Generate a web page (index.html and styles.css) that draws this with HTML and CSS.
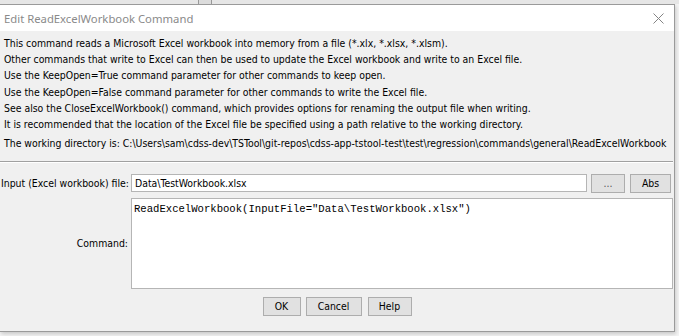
FILE: index.html
```html
<!DOCTYPE html>
<html>
<head>
<meta charset="utf-8">
<link rel="stylesheet" href="styles.css">
</head>
<body>
<div class="backdrop">
  <div class="topstrip"><span class="seg"></span></div>
  <div class="dialog">
    <div class="titlebar">
      <span class="title">Edit ReadExcelWorkbook Command</span>
      <svg class="close" width="11" height="11" viewBox="0 0 11 11"><path d="M0.5 0.5 L10.5 10.5 M10.5 0.5 L0.5 10.5" stroke="#333" stroke-width="1" fill="none"/></svg>
    </div>
    <div class="body">
      <div class="info">
        <div class="line">This command reads a Microsoft Excel workbook into memory from a file (*.xlx, *.xlsx, *.xlsm).</div>
        <div class="line">Other commands that write to Excel can then be used to update the Excel workbook and write to an Excel file.</div>
        <div class="line">Use the KeepOpen=True command parameter for other commands to keep open.</div>
        <div class="line">Use the KeepOpen=False command parameter for other commands to write the Excel file.</div>
        <div class="line">See also the CloseExcelWorkbook() command, which provides options for renaming the output file when writing.</div>
        <div class="line">It is recommended that the location of the Excel file be specified using a path relative to the working directory.</div>
        <div class="line wd">The working directory is: C:\Users\sam\cdss-dev\TSTool\git-repos\cdss-app-tstool-test\test\regression\commands\general\ReadExcelWorkbook</div>
      </div>
      <div class="sep"></div>
      <div class="form">
        <div class="label">Input (Excel workbook) file:</div>
        <div class="inputrow">
          <div class="field">Data\TestWorkbook.xlsx</div>
          <div class="btn dots">...</div>
          <div class="btn abs">Abs</div>
        </div>
        <div class="label cmdlabel">Command:</div>
        <div class="textarea">ReadExcelWorkbook(InputFile="Data\TestWorkbook.xlsx")</div>
      </div>
      <div class="actions">
        <div class="btn ok">OK</div>
        <div class="btn cancel">Cancel</div>
        <div class="btn help">Help</div>
      </div>
    </div>
  </div>
</div>
</body>
</html>
```
FILE: styles.css
```css
* { box-sizing: border-box; }
html, body { margin: 0; padding: 0; }
body {
  width: 679px;
  height: 336px;
  overflow: hidden;
  background: #f3f3f3;
  font-family: "DejaVu Sans Condensed", "Liberation Sans", sans-serif;
}
.backdrop {
  position: relative;
  width: 679px;
  height: 336px;
  background: #f4f4f4;
}
.topstrip {
  height: 4px;
  background: #e6e6e6;
  position: relative;
}
.seg {
  position: absolute;
  left: 198px;
  top: 0;
  width: 14px;
  height: 4px;
  border-left: 1px solid #999;
  border-right: 1px solid #999;
  background: #dcdcdc;
}
.dialog {
  width: 675px;
  height: 328px;
  border: 1px solid #9a9a9a;
  border-left: none;
  background: #f0f0f0;
  box-shadow: 1px 2px 4px rgba(0,0,0,0.18);
  display: flex;
  flex-direction: column;
}
.titlebar {
  height: 26px;
  background: #ffffff;
  display: flex;
  align-items: center;
  justify-content: space-between;
  padding: 0 10px 0 4px;
}
.title {
  font-family: "Noto Sans", "Liberation Sans", sans-serif;
  font-size: 11.3px;
  color: #8a8a8a;
}
.close { opacity: 0.6; }
.body {
  flex: 1;
  display: flex;
  flex-direction: column;
}
.info {
  padding: 4px 0 0 4px;
  font-size: 10.4px;
  color: #000;
}
.line {
  height: 16.2px;
  line-height: 16px;
  white-space: nowrap;
}
.wd { margin-top: 2.5px; }
.sep {
  margin-top: 10px;
  height: 2px;
  border-top: 1px solid #a0a0a0;
  border-bottom: 1px solid #ffffff;
  margin-right: 1px;
}
.form {
  margin-top: 11px;
  display: grid;
  grid-template-columns: 127px 1fr;
  column-gap: 3px;
  row-gap: 5px;
  padding-left: 1px;
  padding-right: 1px;
  font-size: 10.4px;
}
.label {
  text-align: right;
  align-self: center;
  white-space: nowrap;
}
.inputrow {
  display: flex;
  align-items: center;
  padding-right: 2px;
}
.field {
  flex: 1;
  height: 18px;
  background: #fff;
  border: 1px solid #b5b5b5;
  padding: 0 3px;
  line-height: 16px;
}
.btn {
  height: 19px;
  background: #e1e1e1;
  border: 1px solid #adadad;
  text-align: center;
  line-height: 17px;
  font-size: 10.4px;
}
.dots { width: 34px; margin-left: 4px; color: #555; }
.abs { width: 41px; margin-left: 5px; }
.textarea {
  height: 91px;
  background: #fff;
  border: 1px solid #b5b5b5;
  padding: 3px 2px;
  font-family: "Liberation Mono", monospace;
  font-size: 10.6px;
  line-height: 14px;
  white-space: pre;
}
.actions {
  margin-top: 8px;
  display: flex;
  justify-content: center;
  gap: 5px;
}
.ok { width: 38px; }
.cancel { width: 56px; }
.help { width: 44px; margin-left: 1px; }
```
